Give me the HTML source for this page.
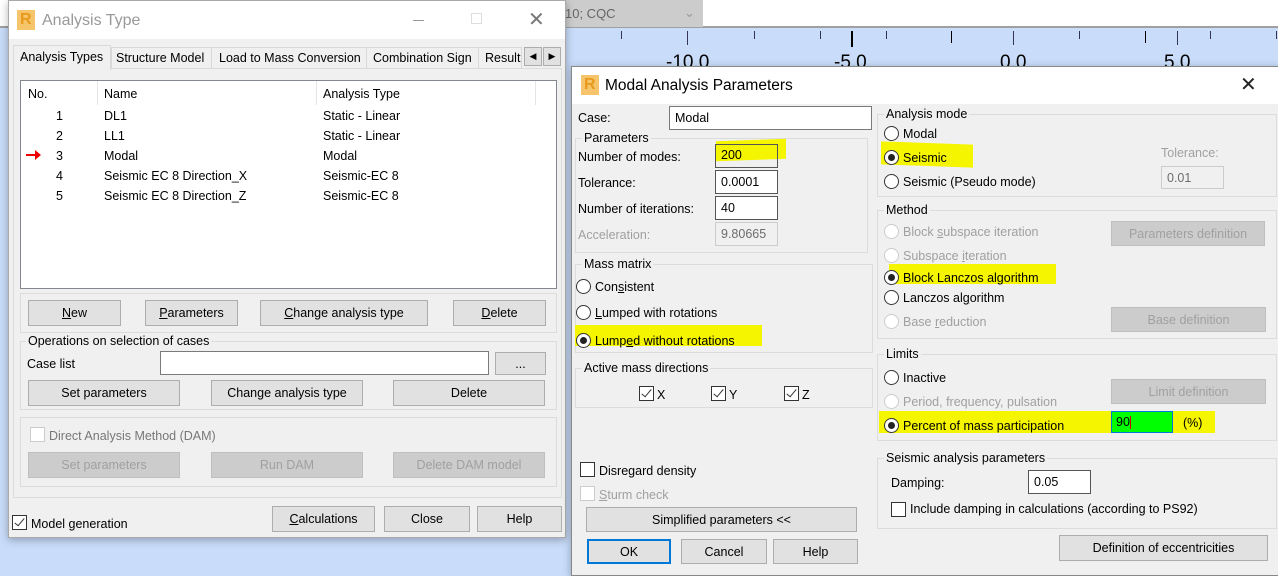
<!DOCTYPE html>
<html><head><meta charset="utf-8"><style>
*{box-sizing:border-box;margin:0;padding:0}
body{width:1278px;height:573px;overflow:hidden;position:relative;background:#c9ddfa;font-family:"Liberation Sans",sans-serif;font-size:12.5px;color:#000}
.a{position:absolute;white-space:nowrap}
.t{position:absolute;white-space:nowrap;line-height:16px;transform:translateY(-8px)}
.btn{position:absolute;background:#e1e1e1;border:1px solid #adadad;display:flex;align-items:center;justify-content:center;white-space:nowrap}
.dis{background:#cccccc;border-color:#bfbfbf;color:#a0a0a0}
.inp{position:absolute;background:#fff;border:1px solid #7a7a7a;padding-left:5px;display:flex;align-items:center}
.inpd{background:#f0f0f0;border-color:#ccc;color:#6d6d6d}
.grp{position:absolute;border:1px solid #dcdcdc}
.gl{position:absolute;background:#f0f0f0;padding:0 2px;line-height:14px;transform:translateY(-7px);white-space:nowrap}
.rad{position:absolute;width:15px;height:15px;border-radius:50%;border:1px solid #333;background:#fff}
.rad.on::after{content:"";position:absolute;left:3px;top:3px;width:7px;height:7px;border-radius:50%;background:#222}
.rad.d{border-color:#ccc}
.cb{position:absolute;width:15px;height:15px;border:1px solid #333;background:#fff}
.cb.on::after{content:"";position:absolute;left:4px;top:0px;width:4px;height:9px;border:solid #333;border-width:0 1.5px 1.5px 0;transform:rotate(40deg)}
.g{color:#a0a0a0}
.hl{position:absolute;background:#f5f500}
u{text-decoration:underline}
.tk{position:absolute;top:31px;width:1px;height:8px;background:#335}
</style></head><body>
<div class="a" style="left:0;top:0;width:1278px;height:28px;background:#fff;border-bottom:2px solid #a0a0a0"></div>
<div class="a" style="left:560px;top:0;width:143px;height:27px;background:#cccccc;color:#666;padding:6px 0 0 5px;font-size:13px">10; CQC<span style="position:absolute;left:124px;top:5px;color:#999">&#8964;</span></div>
<div class="tk" style="left:621px"></div>
<div class="tk" style="left:687px;height:14px"></div>
<div class="tk" style="left:754px"></div>
<div class="tk" style="left:820px"></div>
<div class="tk" style="left:851px;height:16px;background:#000;width:2px"></div>
<div class="tk" style="left:886px"></div>
<div class="tk" style="left:951px;height:12px;background:#000"></div>
<div class="tk" style="left:1013px;height:14px"></div>
<div class="tk" style="left:1079px"></div>
<div class="tk" style="left:1145px;height:12px;background:#000"></div>
<div class="tk" style="left:1177px;height:14px"></div>
<div class="tk" style="left:1210px"></div>
<div class="tk" style="left:1276px"></div>
<div class="a" style="left:666px;top:52px;font-size:19px">-10.0</div>
<div class="a" style="left:834px;top:52px;font-size:19px">-5.0</div>
<div class="a" style="left:1000px;top:52px;font-size:19px">0.0</div>
<div class="a" style="left:1164px;top:52px;font-size:19px">5.0</div>

<!-- LEFT DIALOG -->
<div class="a" style="left:8px;top:0;width:558px;height:538px;background:#f0f0f0;border:1px solid #aaa;box-shadow:0 2px 8px rgba(0,0,0,.3)">
<div class="a" style="left:0;top:0;width:556px;height:38px;background:#fff"></div>
</div>
<div class="a" style="left:17px;top:10px;width:18px;height:20px;background:#f6c46a"><span style="position:absolute;left:3px;top:1px;color:#e89a1c;font-weight:bold;font-size:16px">R</span></div>
<div class="t" style="left:42px;top:21px;font-size:16px;color:#999">Analysis Type</div>
<div class="a" style="left:413px;top:20px;width:11px;height:1px;background:#999"></div>
<div class="a" style="left:471px;top:13px;width:11px;height:11px;border:1px solid #ddd"></div>
<div class="t" style="left:528px;top:20px;font-size:20px;color:#777">&#x2715;</div>
<div class="a" style="left:13px;top:68px;width:549px;height:430px;border:1px solid #dcdcdc;background:#f0f0f0"></div>
<div class="a" style="left:111px;top:47px;width:411px;height:22px;border:1px solid #d9d9d9;background:#f0f0f0"></div>
<div class="t" style="left:116px;top:58px">Structure Model</div>
<div class="a" style="left:211px;top:47px;width:1px;height:21px;background:#d9d9d9"></div>
<div class="t" style="left:219px;top:58px">Load to Mass Conversion</div>
<div class="a" style="left:366px;top:47px;width:1px;height:21px;background:#d9d9d9"></div>
<div class="t" style="left:373px;top:58px">Combination Sign</div>
<div class="a" style="left:478px;top:47px;width:1px;height:21px;background:#d9d9d9"></div>
<div class="t" style="left:485px;top:58px">Result</div>
<div class="a" style="left:13px;top:45px;width:98px;height:25px;border:1px solid #d9d9d9;border-bottom:none;background:#f0f0f0"></div>
<div class="t" style="left:20px;top:57px">Analysis Types</div>
<div class="a" style="left:524px;top:47px;width:18px;height:19px;border:1px solid #adadad;background:#e1e1e1;font-size:9px;text-align:center;line-height:17px">&#9664;</div>
<div class="a" style="left:543px;top:47px;width:18px;height:19px;border:1px solid #adadad;background:#e1e1e1;font-size:9px;text-align:center;line-height:17px">&#9654;</div>
<div class="a" style="left:20px;top:80px;width:537px;height:209px;background:#fff;border:1px solid #828790"></div>
<div class="a" style="left:97px;top:81px;width:1px;height:24px;background:#e5e5e5"></div>
<div class="a" style="left:316px;top:81px;width:1px;height:24px;background:#e5e5e5"></div>
<div class="a" style="left:535px;top:81px;width:1px;height:24px;background:#e5e5e5"></div>
<div class="t" style="left:28px;top:94px">No.</div>
<div class="t" style="left:104px;top:94px">Name</div>
<div class="t" style="left:323px;top:94px">Analysis Type</div>
<div class="t" style="left:56px;top:116px">1</div><div class="t" style="left:104px;top:116px">DL1</div><div class="t" style="left:323px;top:116px">Static - Linear</div>
<div class="t" style="left:56px;top:136px">2</div><div class="t" style="left:104px;top:136px">LL1</div><div class="t" style="left:323px;top:136px">Static - Linear</div>
<svg class="a" style="left:26px;top:149px" width="16" height="12"><path d="M0 5h9V1l6 5-6 5V7H0z" fill="#e00"/></svg>
<div class="t" style="left:56px;top:156px">3</div><div class="t" style="left:104px;top:156px">Modal</div><div class="t" style="left:323px;top:156px">Modal</div>
<div class="t" style="left:56px;top:176px">4</div><div class="t" style="left:104px;top:176px">Seismic EC 8 Direction_X</div><div class="t" style="left:323px;top:176px">Seismic-EC 8</div>
<div class="t" style="left:56px;top:196px">5</div><div class="t" style="left:104px;top:196px">Seismic EC 8 Direction_Z</div><div class="t" style="left:323px;top:196px">Seismic-EC 8</div>
<div class="grp" style="left:20px;top:293px;width:537px;height:40px"></div>
<div class="btn" style="left:28px;top:300px;width:93px;height:26px"><u>N</u>ew</div>
<div class="btn" style="left:145px;top:300px;width:93px;height:26px"><u>P</u>arameters</div>
<div class="btn" style="left:260px;top:300px;width:168px;height:26px"><u>C</u>hange analysis type</div>
<div class="btn" style="left:453px;top:300px;width:93px;height:26px"><u>D</u>elete</div>
<div class="grp" style="left:20px;top:341px;width:537px;height:69px"></div>
<div class="gl" style="left:26px;top:341px">Operations on selection of cases</div>
<div class="t" style="left:27px;top:364px">Case list</div>
<div class="inp" style="left:160px;top:351px;width:329px;height:24px"></div>
<div class="btn" style="left:495px;top:352px;width:51px;height:23px">...</div>
<div class="btn" style="left:28px;top:380px;width:152px;height:26px">Set parameters</div>
<div class="btn" style="left:211px;top:380px;width:152px;height:26px">Change analysis type</div>
<div class="btn" style="left:393px;top:380px;width:152px;height:26px">Delete</div>
<div class="grp" style="left:20px;top:417px;width:537px;height:70px"></div>
<div class="cb" style="left:30px;top:427px;border-color:#ccc"></div>
<div class="t g" style="left:49px;top:436px;color:#777">Direct Analysis Method (DAM)</div>
<div class="btn dis" style="left:28px;top:452px;width:152px;height:26px">Set parameters</div>
<div class="btn dis" style="left:211px;top:452px;width:152px;height:26px">Run DAM</div>
<div class="btn dis" style="left:393px;top:452px;width:152px;height:26px">Delete DAM model</div>
<div class="cb on" style="left:12px;top:515px"></div>
<div class="t" style="left:31px;top:524px">Model generation</div>
<div class="btn" style="left:272px;top:506px;width:103px;height:26px"><u>C</u>alculations</div>
<div class="btn" style="left:384px;top:506px;width:86px;height:26px">Close</div>
<div class="btn" style="left:477px;top:506px;width:85px;height:26px">Help</div>

<!-- RIGHT DIALOG -->
<div class="a" style="left:571px;top:66px;width:710px;height:510px;background:#f0f0f0;border:1px solid #888;box-shadow:0 2px 8px rgba(0,0,0,.3)">
<div class="a" style="left:0;top:0;width:710px;height:37px;background:#fff"></div>
</div>
<div class="a" style="left:581px;top:75px;width:18px;height:20px;background:#f6c46a"><span style="position:absolute;left:3px;top:1px;color:#e89a1c;font-weight:bold;font-size:16px">R</span></div>
<div class="t" style="left:605px;top:86px;font-size:15.5px">Modal Analysis Parameters</div>
<div class="t" style="left:1240px;top:85px;font-size:20px;color:#222">&#x2715;</div>

<div class="t" style="left:578px;top:118px">Case:</div>
<div class="inp" style="left:669px;top:106px;width:203px;height:24px">Modal</div>
<div class="grp" style="left:575px;top:138px;width:293px;height:115px"></div>
<div class="gl" style="left:582px;top:138px">Parameters</div>
<div class="hl" style="left:716px;top:140px;width:70px;height:20px;transform:skewY(-2deg)"></div>
<div class="t" style="left:578px;top:157px">Number of modes:</div>
<div class="a" style="left:715px;top:144px;width:63px;height:24px;border:1px solid #555;padding:3px 5px">200</div>
<div class="t" style="left:578px;top:183px">Tolerance:</div>
<div class="inp" style="left:715px;top:170px;width:63px;height:24px;border-color:#555">0.0001</div>
<div class="t" style="left:578px;top:209px">Number of iterations:</div>
<div class="inp" style="left:715px;top:196px;width:63px;height:24px;border-color:#555">40</div>
<div class="t g" style="left:578px;top:235px">Acceleration:</div>
<div class="inp inpd" style="left:715px;top:222px;width:63px;height:24px">9.80665</div>

<div class="grp" style="left:575px;top:264px;width:298px;height:89px"></div>
<div class="gl" style="left:582px;top:264px">Mass matrix</div>
<div class="rad" style="left:576px;top:279px"></div><div class="t" style="left:595px;top:287px">Con<u>s</u>istent</div>
<div class="rad" style="left:576px;top:305px"></div><div class="t" style="left:595px;top:313px"><u>L</u>umped with rotations</div>
<div class="hl" style="left:575px;top:325px;width:187px;height:21px"></div>
<div class="rad on" style="left:576px;top:333px"></div><div class="t" style="left:595px;top:341px">Lump<u>e</u>d without rotations</div>
<div class="grp" style="left:575px;top:368px;width:298px;height:40px"></div>
<div class="gl" style="left:582px;top:368px">Active mass directions</div>
<div class="cb on" style="left:639px;top:386px"></div><div class="t" style="left:657px;top:395px">X</div>
<div class="cb on" style="left:711px;top:386px"></div><div class="t" style="left:729px;top:395px">Y</div>
<div class="cb on" style="left:784px;top:386px"></div><div class="t" style="left:802px;top:395px">Z</div>
<div class="cb" style="left:580px;top:462px"></div><div class="t" style="left:599px;top:471px">Disregard density</div>
<div class="cb" style="left:580px;top:486px;border-color:#ccc"></div><div class="t g" style="left:599px;top:495px"><u>S</u>turm check</div>
<div class="btn" style="left:586px;top:507px;width:271px;height:25px">Simplified parameters &lt;&lt;</div>
<div class="btn" style="left:587px;top:539px;width:84px;height:25px;border:2px solid #0078d7">OK</div>
<div class="btn" style="left:681px;top:539px;width:86px;height:25px">Cancel</div>
<div class="btn" style="left:773px;top:539px;width:85px;height:25px">Help</div>

<div class="grp" style="left:877px;top:114px;width:400px;height:83px"></div>
<div class="gl" style="left:884px;top:114px">Analysis mode</div>
<div class="rad" style="left:884px;top:126px"></div><div class="t" style="left:903px;top:134px">Modal</div>
<div class="hl" style="left:881px;top:143px;width:92px;height:23px;transform:skewY(2deg)"></div>
<div class="rad on" style="left:884px;top:150px"></div><div class="t" style="left:903px;top:158px">Seismic</div>
<div class="rad" style="left:884px;top:174px"></div><div class="t" style="left:903px;top:182px">Seismic (Pseudo mode)</div>
<div class="t g" style="left:1161px;top:153px">Tolerance:</div>
<div class="inp inpd" style="left:1161px;top:166px;width:63px;height:23px">0.01</div>

<div class="grp" style="left:877px;top:210px;width:400px;height:129px"></div>
<div class="gl" style="left:884px;top:210px">Method</div>
<div class="rad d" style="left:884px;top:224px"></div><div class="t g" style="left:903px;top:232px">Block <u>s</u>ubspace iteration</div>
<div class="rad d" style="left:884px;top:248px"></div><div class="t g" style="left:903px;top:256px">Subspace <u>i</u>teration</div>
<div class="hl" style="left:889px;top:264px;width:167px;height:20px"></div>
<div class="rad on" style="left:884px;top:270px"></div><div class="t" style="left:903px;top:278px">Block Lanczos algorithm</div>
<div class="rad" style="left:884px;top:290px"></div><div class="t" style="left:903px;top:298px">Lanczos al<u>g</u>orithm</div>
<div class="rad d" style="left:884px;top:314px"></div><div class="t g" style="left:903px;top:322px">Base <u>r</u>eduction</div>
<div class="btn dis" style="left:1111px;top:221px;width:154px;height:25px">Parameters definition</div>
<div class="btn dis" style="left:1111px;top:307px;width:155px;height:25px">Base definition</div>

<div class="grp" style="left:877px;top:354px;width:400px;height:87px"></div>
<div class="gl" style="left:884px;top:354px">Limits</div>
<div class="rad" style="left:884px;top:370px"></div><div class="t" style="left:903px;top:378px">Inactive</div>
<div class="rad d" style="left:884px;top:394px"></div><div class="t g" style="left:903px;top:402px">Period, frequency, pulsation</div>
<div class="hl" style="left:879px;top:411px;width:336px;height:22px"></div>
<div class="rad on" style="left:884px;top:418px"></div><div class="t" style="left:903px;top:426px">Percent of mass participation</div>
<div class="btn dis" style="left:1111px;top:379px;width:155px;height:25px">Limit definition</div>
<div class="a" style="left:1111px;top:411px;width:62px;height:22px;background:#00ff00;border:1px solid #0078d7;padding:3px 4px">90<span style="display:inline-block;width:1px;height:13px;background:#c00;vertical-align:middle"></span></div>
<div class="t" style="left:1183px;top:423px">(%)</div>

<div class="grp" style="left:877px;top:458px;width:400px;height:71px"></div>
<div class="gl" style="left:884px;top:458px">Seismic analysis parameters</div>
<div class="t" style="left:891px;top:483px">Damping:</div>
<div class="inp" style="left:1028px;top:470px;width:63px;height:24px;border-color:#555">0.05</div>
<div class="cb" style="left:891px;top:502px"></div><div class="t" style="left:910px;top:509px">Include damping in calculations (according to PS92)</div>
<div class="btn" style="left:1059px;top:535px;width:209px;height:26px">Definition of eccentricities</div>
</body></html>
